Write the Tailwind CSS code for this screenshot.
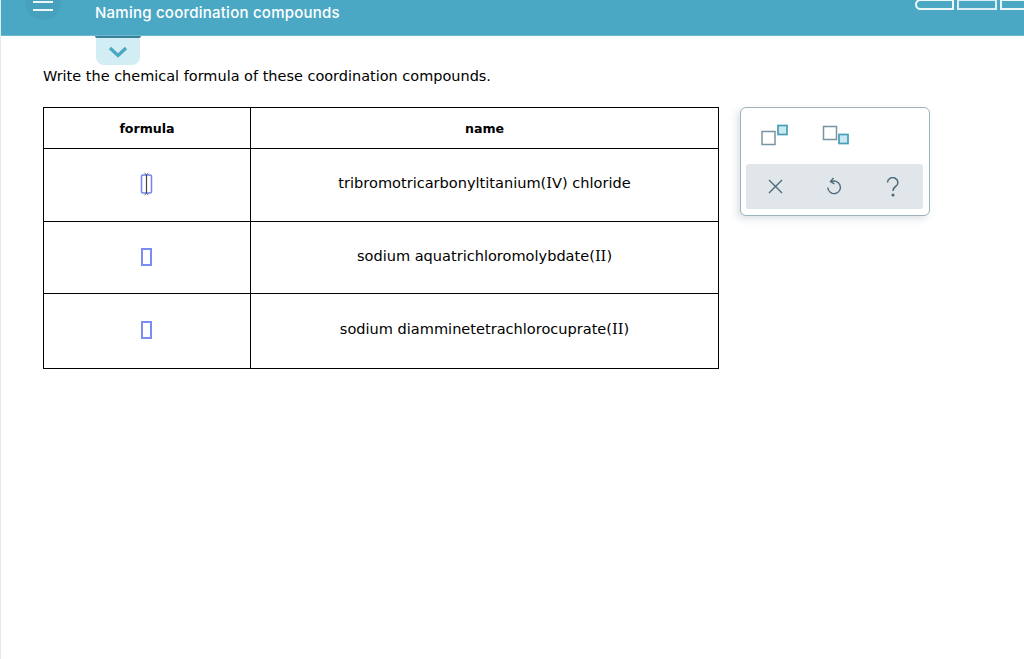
<!DOCTYPE html>
<html>
<head>
<meta charset="utf-8">
<script src="https://cdn.jsdelivr.net/npm/@tailwindcss/browser@4"></script>
</head>
<body class="bg-white">
<div class="w-[1024px] h-[659px] overflow-hidden relative font-['DejaVu_Sans',sans-serif] text-black border-l border-[#e3eaee]">
  <header class="h-9 bg-[#4ba8c4] border-b border-[#6db8cf] flex items-start relative -ml-px">
    <div class="absolute left-[25px] -top-[16px] w-9 h-9 rounded-full bg-[#48a1bc] flex flex-col items-center justify-start gap-[6px] pt-[17px]">
      <span class="block w-5 h-[2px] bg-white/90"></span>
      <span class="block w-5 h-[2px] bg-white/90"></span>
    </div>
    <h1 class="ml-[95px] mt-[3px] text-[15px] leading-5 font-medium text-white font-['Inter',sans-serif] tracking-[0.24px]">Naming coordination compounds</h1>
    <div class="absolute left-[915px] -top-px flex gap-[3px]">
      <span class="block w-[39px] h-[11px] border-2 border-white/90 rounded-l-[8px]"></span>
      <span class="block w-[40px] h-[11px] border-2 border-white/80"></span>
      <span class="block w-[30px] h-[11px] border-2 border-white/90"></span>
    </div>
  </header>
  <div class="absolute left-[95px] top-9 w-[44px] h-[29px] bg-[#d2edf3] rounded-b-lg flex items-center justify-center pt-[2px]">
    <svg width="20" height="12" viewBox="0 0 20 12" fill="none" stroke="#4ba8c4" stroke-width="3.200"><path d="M2 2 L10 9.500 L18 2"/></svg>
  </div>
  <div class="absolute left-[94px] top-9 w-[46px] h-[2px] bg-[#3a8197] rounded-b-sm"></div>
  <main class="pl-[42px] pt-[30px] flex items-start">
    <div class="w-[676px]">
      <p class="text-[14.48px] leading-5 h-5">Write the chemical formula of these coordination compounds.</p>
      <table class="mt-[21px] w-[676px] border-collapse table-fixed text-[14.55px]">
        <colgroup><col class="w-[207px]"><col></colgroup>
        <tr class="h-[41px]">
          <th class="border border-black text-[12.6px] font-bold p-0 pt-[2px]">formula</th>
          <th class="border border-black text-[12.6px] font-bold p-0 pt-[2px]">name</th>
        </tr>
        <tr class="h-[73px]">
          <td class="border border-black p-0 text-center pb-[3px] pr-[1px]">
            <svg class="inline-block align-middle" width="13" height="24" viewBox="0 0 13 24" fill="none">
              <rect x="1.500" y="3" width="10" height="18" rx="1.500" stroke="#6f83f2" stroke-width="1.500"/>
              <path d="M6.500 2.500 V21.500" stroke="#444" stroke-width="1.200"/>
              <path d="M4.500 1 L6.500 2.500 L8.500 1 M4.500 23 L6.500 21.500 L8.500 23" stroke="#555" stroke-width="0.800"/>
            </svg>
          </td>
          <td class="border border-black p-0 text-center pb-[4px]">tribromotricarbonyltitanium(<span class="font-['DejaVu_Serif',serif]">I</span>V) chloride</td>
        </tr>
        <tr class="h-[72px]">
          <td class="border border-black p-0 text-center pb-[4px] pr-[1px]">
            <span class="inline-block align-middle w-[11px] h-[18px] border-2 border-[#7b8df5]"></span>
          </td>
          <td class="border border-black p-0 text-center pb-[4px]">sodium aquatrichloromolybdate(<span class="font-['DejaVu_Serif',serif]">II</span>)</td>
        </tr>
        <tr class="h-[75px]">
          <td class="border border-black p-0 text-center pb-[4px] pr-[1px]">
            <span class="inline-block align-middle w-[11px] h-[18px] border-2 border-[#7b8df5]"></span>
          </td>
          <td class="border border-black p-0 text-center pb-[4px]">sodium diamminetetrachlorocuprate(<span class="font-['DejaVu_Serif',serif]">II</span>)</td>
        </tr>
      </table>
    </div>
    <aside class="ml-[21px] mt-[41px] w-[190px] h-[109px] rounded-[6px] border border-[#9db3bc] bg-white shadow-[-3px_3px_7px_rgba(120,140,150,0.25)] pl-[5px] pr-[6px] pt-[16px] flex flex-col">
      <div class="flex h-[40px] items-start">
        <svg class="ml-[15px]" width="30" height="24" viewBox="0 0 30 24" fill="none">
          <rect x="1" y="7.500" width="13" height="13" stroke="#7a949f" stroke-width="1.500" fill="#fff"/>
          <rect x="17" y="1.500" width="9" height="9" stroke="#4a9db8" stroke-width="1.700" fill="#c9e9f0"/>
        </svg>
        <svg class="ml-[31px]" width="30" height="24" viewBox="0 0 30 24" fill="none">
          <rect x="1.500" y="2.500" width="13" height="13" stroke="#7a949f" stroke-width="1.500" fill="#fff"/>
          <rect x="17" y="10.500" width="9" height="9" stroke="#4a9db8" stroke-width="1.700" fill="#c9e9f0"/>
        </svg>
      </div>
      <div class="h-[45px] bg-[#e0e6e9] rounded-[3px] flex items-center">
        <svg class="ml-[21px]" width="17" height="17" viewBox="0 0 17 17" fill="none" stroke="#4c6b7a" stroke-width="1.400"><path d="M2 2 L15 15 M15 2 L2 15"/></svg>
        <svg class="ml-[42px]" width="16" height="20" viewBox="0 0 16 20" fill="none" stroke="#4c6b7a" stroke-width="1.400"><path d="M7.500 1 L4.500 4.500 L8.500 7"/><path d="M4.700 5 A 6.300 6.300 0 1 1 1.800 10.500"/></svg>
        <svg class="ml-[44px]" width="14" height="20" viewBox="0 0 14 20" fill="none" stroke="#4c6b7a" stroke-width="1.500"><path d="M1.500 5.500 A 5.200 4.800 0 1 1 9.500 9.500 C 7.500 10.800 7 11.500 7 14"/><circle cx="7" cy="18" r="0.800" fill="#4c6b7a"/></svg>
      </div>
    </aside>
  </main>
</div>
</body>
</html>
